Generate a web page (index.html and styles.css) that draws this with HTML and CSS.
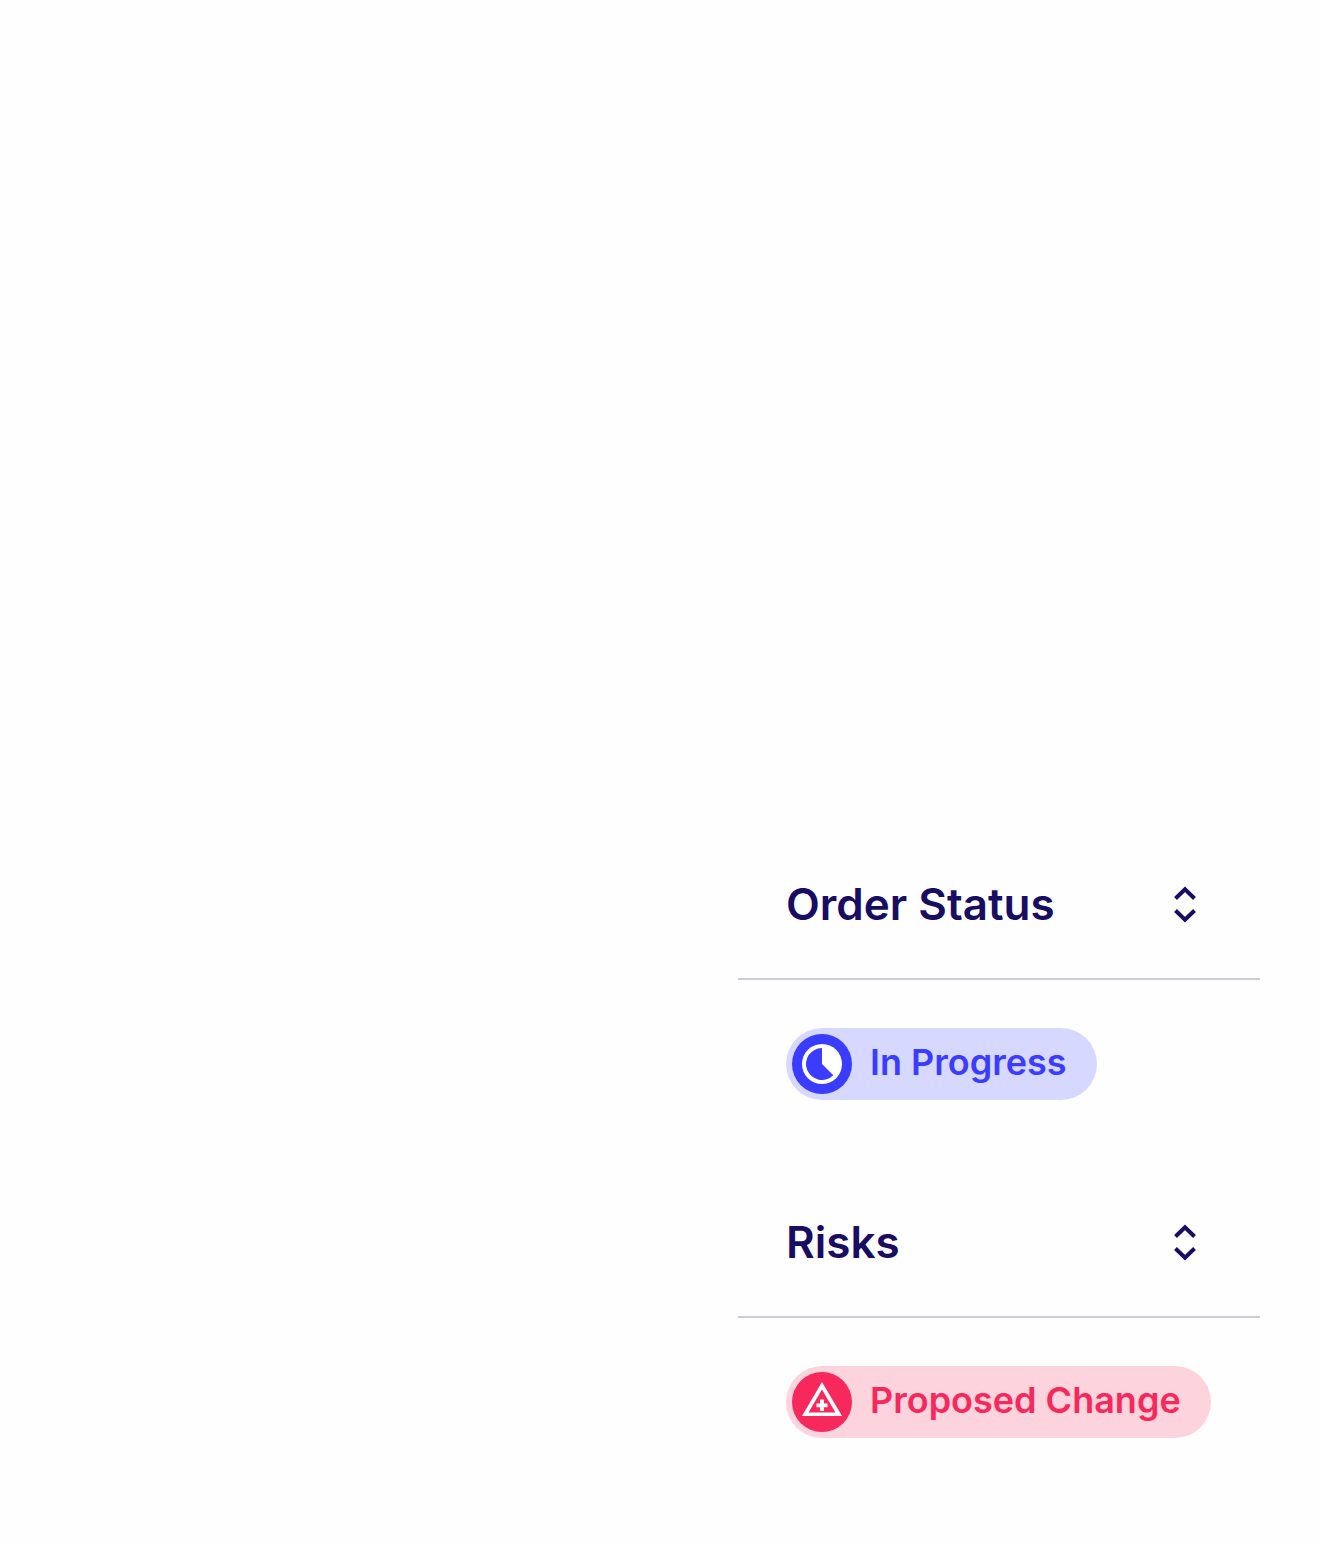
FILE: index.html
```html
<!DOCTYPE html>
<html lang="en">
<head>
  <meta charset="UTF-8">
  <meta name="viewport" content="width=device-width, initial-scale=1.0">
  <title>Order Status</title>
  <link rel="stylesheet" href="styles.css">
</head>
<body>
  <main class="page">
    <div class="panel">
      <section class="column">
        <header class="column-header">
          <h2 class="column-title">Order Status</h2>
          <button class="sort-btn" type="button" aria-label="Sort by order status">
            <svg width="54" height="52" viewBox="0 0 54 52" fill="none" stroke="currentColor" stroke-width="4">
              <path d="M17.5 20.5L27 11.2L36.5 20.5M17.5 32.5L27 41.8L36.5 32.5"/>
            </svg>
          </button>
        </header>
        <div class="column-body">
          <span class="tag tag-progress">
            <svg class="tag-icon" viewBox="0 0 60 60">
              <circle cx="30" cy="30" r="30" fill="currentColor"/>
              <circle cx="30" cy="30" r="20" fill="#fff"/>
              <path d="M30 14A16 16 0 1 0 41.3 41.3L30 30Z" fill="currentColor"/>
            </svg>
            <span class="tag-label">In Progress</span>
          </span>
        </div>
      </section>

      <section class="column">
        <header class="column-header">
          <h2 class="column-title">Risks</h2>
          <button class="sort-btn" type="button" aria-label="Sort by risks">
            <svg width="54" height="52" viewBox="0 0 54 52" fill="none" stroke="currentColor" stroke-width="4">
              <path d="M17.5 20.5L27 11.2L36.5 20.5M17.5 32.5L27 41.8L36.5 32.5"/>
            </svg>
          </button>
        </header>
        <div class="column-body">
          <span class="tag tag-risk">
            <svg class="tag-icon" viewBox="0 0 60 60">
              <circle cx="30" cy="30" r="30" fill="currentColor"/>
              <path d="M30 10L50 44H10ZM30 17.5L16.5 40.5H43.5Z" fill="#fff" fill-rule="evenodd"/>
              <path d="M30 27.5V39M24.5 33.3H35.5" stroke="#fff" stroke-width="3.8"/>
            </svg>
            <span class="tag-label">Proposed Change</span>
          </span>
        </div>
      </section>
    </div>
  </main>
</body>
</html>
```
FILE: styles.css
```css
* {
  box-sizing: border-box;
}

body {
  margin: 0;
  font-family: Inter, "Liberation Sans", sans-serif;
  background-color: #fefefe;
  color: #180d62;
}

.page {
  display: flex;
  flex-direction: column;
  justify-content: flex-end;
  align-items: flex-end;
  min-height: 100vh;
  padding: 40px 60px;
}

.panel {
  width: 100%;
  max-width: 522px;
}

.column-header {
  display: flex;
  justify-content: space-between;
  align-items: center;
  padding: 48px;
  border-bottom: 2px solid #cdccd6;
}

.column-title {
  margin: 0;
  font-size: 44px;
  line-height: 52px;
  font-weight: 600;
}

.sort-btn {
  display: flex;
  padding: 0;
  border: none;
  background: none;
  color: inherit;
  cursor: pointer;
}

.column-body {
  display: flex;
  padding: 48px 48px 68px;
}

.tag {
  display: flex;
  align-items: center;
  gap: 18px;
  padding: 6px 30px 6px 6px;
  border-radius: 36px;
  white-space: nowrap;
}

.tag-icon {
  flex: none;
  width: 60px;
  height: 60px;
}

.tag-label {
  padding-bottom: 4px;
  font-size: 36px;
  line-height: 44px;
  font-weight: 600;
}

.tag-progress {
  background-color: #d7d8ff;
  color: #3a3cff;
}

.tag-risk {
  background-color: #fdd3dd;
  color: #f7285b;
}
```
